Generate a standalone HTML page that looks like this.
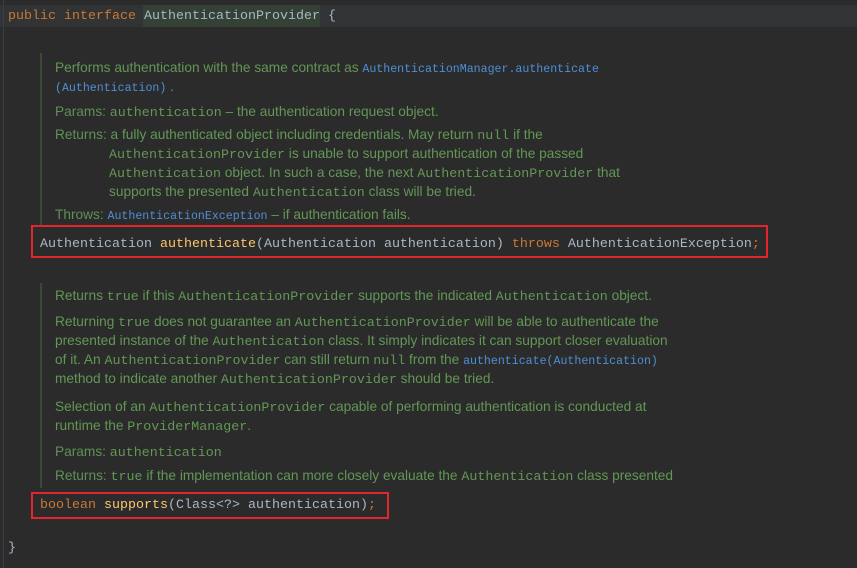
<!DOCTYPE html>
<html><head><meta charset="utf-8"><style>
body{margin:0;width:857px;height:568px;background:#2b2b2b;overflow:hidden;position:relative;font-family:"Liberation Sans",sans-serif}
.l{position:absolute;white-space:pre;line-height:18px}
.c{font-family:"Liberation Mono",monospace;font-size:13.33px;color:#a9b7c6}
.d{font-size:13.7px;color:#629755;left:55px}
.m{font-family:"Liberation Mono",monospace;font-size:13.33px;color:#629755}
.a{font-family:"Liberation Mono",monospace;font-size:11.6px;color:#4f8fd6}
.lb{color:#5f9157}
.k{color:#cc7832}.f{color:#ffc66d}
.bar{position:absolute;left:40px;width:2px;background:#3a4936}
.box{position:absolute;border:2px solid #e3262e;box-sizing:border-box}
</style></head><body>
<div style="position:absolute;left:0;top:5px;width:857px;height:22px;background:#313335"></div>
<div style="position:absolute;left:3px;top:0;width:1px;height:568px;background:#3c3f41"></div>
<div style="position:absolute;left:143px;top:5px;width:177px;height:22px;background:#344134"></div>
<div class="l c" style="left:8px;top:8px"><span class="k">public interface </span>AuthenticationProvider {</div>

<div class="bar" style="top:53px;height:172px"></div>
<div class="l d" style="top:59px">Performs authentication with the same contract as <span class="a">AuthenticationManager.authenticate</span></div>
<div class="l d" style="top:78px"><span class="a">(Authentication)</span> .</div>
<div class="l d" style="top:103px"><span class="lb">Params: </span><span class="m">authentication</span> – the authentication request object.</div>
<div class="l d" style="top:126px"><span class="lb">Returns: </span>a fully authenticated object including credentials. May return <span class="m">null</span> if the</div>
<div class="l d" style="top:145px;left:109px"><span class="m">AuthenticationProvider</span> is unable to support authentication of the passed</div>
<div class="l d" style="top:164px;left:109px"><span class="m">Authentication</span> object. In such a case, the next <span class="m">AuthenticationProvider</span> that</div>
<div class="l d" style="top:183px;left:109px">supports the presented <span class="m">Authentication</span> class will be tried.</div>
<div class="l d" style="top:206px"><span class="lb">Throws: </span><span class="a">AuthenticationException</span> – if authentication fails.</div>

<div class="box" style="left:31px;top:225px;width:737px;height:33px"></div>
<div class="l c" style="left:40px;top:236px">Authentication <span class="f">authenticate</span>(Authentication authentication) <span class="k">throws</span> AuthenticationException<span class="k">;</span></div>

<div class="bar" style="top:283px;height:205px"></div>
<div class="l d" style="top:287px">Returns <span class="m">true</span> if this <span class="m">AuthenticationProvider</span> supports the indicated <span class="m">Authentication</span> object.</div>
<div class="l d" style="top:313px">Returning <span class="m">true</span> does not guarantee an <span class="m">AuthenticationProvider</span> will be able to authenticate the</div>
<div class="l d" style="top:332px">presented instance of the <span class="m">Authentication</span> class. It simply indicates it can support closer evaluation</div>
<div class="l d" style="top:351px">of it. An <span class="m">AuthenticationProvider</span> can still return <span class="m">null</span> from the <span class="a">authenticate(Authentication)</span></div>
<div class="l d" style="top:370px">method to indicate another <span class="m">AuthenticationProvider</span> should be tried.</div>
<div class="l d" style="top:398px">Selection of an <span class="m">AuthenticationProvider</span> capable of performing authentication is conducted at</div>
<div class="l d" style="top:417px">runtime the <span class="m">ProviderManager</span>.</div>
<div class="l d" style="top:443px"><span class="lb">Params: </span><span class="m">authentication</span></div>
<div class="l d" style="top:467px"><span class="lb">Returns: </span><span class="m">true</span> if the implementation can more closely evaluate the <span class="m">Authentication</span> class presented</div>

<div class="box" style="left:31px;top:492px;width:358px;height:27px"></div>
<div class="l c" style="left:40px;top:497px"><span class="k">boolean </span><span class="f">supports</span>(Class&lt;?&gt; authentication)<span class="k">;</span></div>
<div class="l c" style="left:8px;top:540px">}</div>
</body></html>
